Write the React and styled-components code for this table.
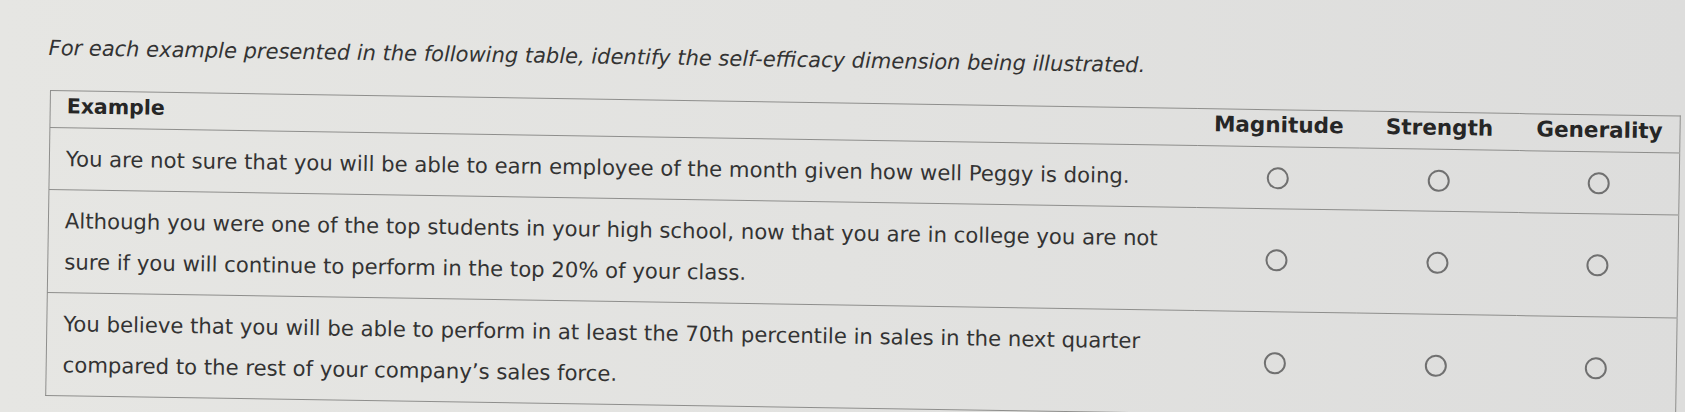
import React from "react";
import styled, { createGlobalStyle } from "styled-components";

const rows = [
  {
    id: 1,
    text: "You are not sure that you will be able to earn employee of the month given how well Peggy is doing.",
  },
  {
    id: 2,
    text: "Although you were one of the top students in your high school, now that you are in college you are not sure if you will continue to perform in the top 20% of your class.",
  },
  {
    id: 3,
    text: "You believe that you will be able to perform in at least the 70th percentile in sales in the next quarter compared to the rest of your company’s sales force.",
  },
];

const dimensions = ["Magnitude", "Strength", "Generality"];

export default function App() {
  return (
    <>
      <GlobalStyle />
      <Page>
        <Sheet>
          <Prompt>
            For each example presented in the following table, identify the
            self-efficacy dimension being illustrated.
          </Prompt>
          <Table>
            <thead>
              <tr>
                <HeadCell>Example</HeadCell>
                {dimensions.map((d) => (
                  <HeadCell key={d} $center>
                    {d}
                  </HeadCell>
                ))}
              </tr>
            </thead>
            <tbody>
              {rows.map((row) => (
                <Row key={row.id}>
                  <TextCell>{row.text}</TextCell>
                  {dimensions.map((d) => (
                    <ChoiceCell key={d}>
                      <Radio
                        type="radio"
                        name={`row-${row.id}`}
                        aria-label={d}
                      />
                    </ChoiceCell>
                  ))}
                </Row>
              ))}
            </tbody>
          </Table>
        </Sheet>
      </Page>
    </>
  );
}

const GlobalStyle = createGlobalStyle`
  html, body {
    margin: 0;
    padding: 0;
  }
  body {
    font-family: "DejaVu Sans", Verdana, sans-serif;
    color: #2c2c2c;
    background: #e2e2df;
  }
`;

const Page = styled.div`
  width: 1685px;
  height: 412px;
  overflow: hidden;
  box-sizing: border-box;
  padding: 36px 0 0 48px;
  background: linear-gradient(90deg, #e6e6e3 0%, #e2e2e0 50%, #dddddc 100%);
`;

// the photo is a bit tilted, so the whole sheet is turned slightly
const Sheet = styled.div`
  transform: rotate(0.9deg);
  transform-origin: 2px 54px;
`;

const Prompt = styled.p`
  margin: 0 0 30px 0;
  font-size: 21px;
  line-height: 24px;
  font-style: italic;
  color: #333;
`;

const Table = styled.table`
  width: 1631px;
  margin-left: 2px;
  border-collapse: collapse;
  border: 1.5px solid #8e8e8c;
`;

const HeadCell = styled.th`
  padding: 3px 16px 9px;
  height: 24px;
  line-height: 24px;
  font-size: ${(p) => (p.$center ? "21.5px" : "20.5px")};
  font-weight: bold;
  color: #262626;
  text-align: ${(p) => (p.$center ? "center" : "left")};
  width: ${(p) => (p.$center ? "128px" : "auto")};
  white-space: nowrap;
`;

const Row = styled.tr`
  border-top: 1.5px solid #8e8e8c;
`;

const TextCell = styled.td`
  padding: 10px 16px;
  font-size: 21.2px;
  line-height: 41px;
  color: #333;
`;

const ChoiceCell = styled.td`
  padding: 10px 16px;
  text-align: center;
  vertical-align: middle;
`;

const Radio = styled.input`
  appearance: none;
  margin: 0;
  width: 22px;
  height: 22px;
  border: 2px solid #707070;
  border-radius: 50%;
  background: transparent;
  vertical-align: middle;
  box-sizing: border-box;
`;
